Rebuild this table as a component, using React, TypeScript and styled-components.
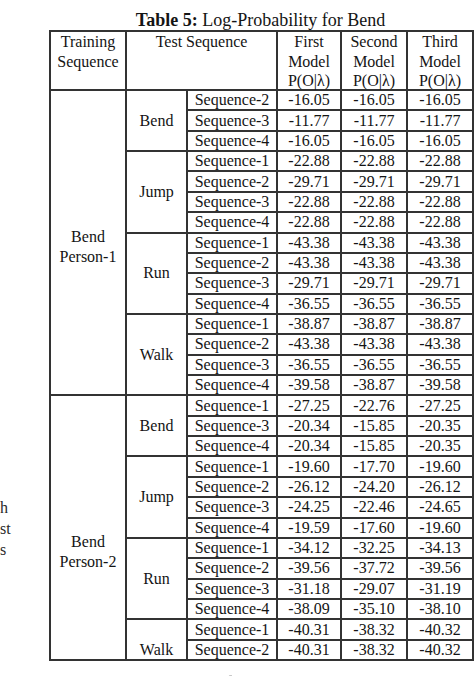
import React from 'react';
import styled, { createGlobalStyle } from 'styled-components';

const GlobalStyle = createGlobalStyle`
  html, body {
    margin: 0;
    padding: 0;
    background: #ffffff;
  }
  body {
    width: 474px;
    height: 676px;
    overflow: hidden;
    font-family: "Liberation Serif", "Times New Roman", serif;
    color: #141414;
  }
`;

const Page = styled.div`
  width: 474px;
  height: 676px;
  overflow: hidden;
  display: flex;
  flex-direction: column;
`;

const Title = styled.div`
  height: 31px;
  box-sizing: border-box;
  padding: 10px 2px 0 49px;
  font-size: 18px;
  line-height: 20px;
  text-align: center;
  white-space: nowrap;

  b {
    font-weight: 700;
  }
`;

const Body = styled.div`
  display: flex;
  align-items: flex-start;
`;

const Gutter = styled.div`
  width: 49px;
  flex-shrink: 0;
  padding-top: 467px;
  display: flex;
  flex-direction: column;
  font-size: 16px;
  line-height: 21px;
  color: #2a2a2a;
`;

const Fragment = styled.div`
  white-space: nowrap;
`;

const Table = styled.table`
  border-collapse: collapse;
  table-layout: fixed;
  width: 423px;
  font-size: 16px;
  line-height: 18px;
`;

const HeadRow = styled.tr`
  height: 59px;
`;

const Row = styled.tr`
  height: 20.36px;
`;

const Th = styled.th`
  font-weight: 400;
  vertical-align: top;
  text-align: center;
  padding: 0;
  border: 2px solid #333;
`;

const HeadText = styled.div`
  height: 57px;
  line-height: 19.5px;
  overflow: visible;
`;

const Td = styled.td<{ $align?: 'middle' | 'bottom'; $shift?: number }>`
  padding: ${({ $shift }) => ($shift ? `${$shift}px 0 0` : '0')};
  text-align: center;
  vertical-align: ${({ $align }) => $align ?? 'middle'};
  border: 2px solid #333;
  white-space: nowrap;
  line-height: 18px;
`;

const Label = styled.div`
  line-height: 20px;
`;

const Footer = styled.div`
  padding: 12px 0 0 40px;
  font-size: 18px;
  line-height: 20px;
  color: #a8a8a8;
  white-space: nowrap;
  filter: blur(0.6px);

  b {
    font-weight: 700;
  }
`;

type Seq = [string, string, string, string];
type Group = { activity: string; rows: Seq[]; align?: 'middle' | 'bottom' };
type Block = { person: string; shift: number; groups: Group[] };

const blocks: Block[] = [
  {
    person: 'Person-1',
    shift: 8,
    groups: [
      {
        activity: 'Bend',
        rows: [
          ['Sequence-2', '-16.05', '-16.05', '-16.05'],
          ['Sequence-3', '-11.77', '-11.77', '-11.77'],
          ['Sequence-4', '-16.05', '-16.05', '-16.05'],
        ],
      },
      {
        activity: 'Jump',
        rows: [
          ['Sequence-1', '-22.88', '-22.88', '-22.88'],
          ['Sequence-2', '-29.71', '-29.71', '-29.71'],
          ['Sequence-3', '-22.88', '-22.88', '-22.88'],
          ['Sequence-4', '-22.88', '-22.88', '-22.88'],
        ],
      },
      {
        activity: 'Run',
        rows: [
          ['Sequence-1', '-43.38', '-43.38', '-43.38'],
          ['Sequence-2', '-43.38', '-43.38', '-43.38'],
          ['Sequence-3', '-29.71', '-29.71', '-29.71'],
          ['Sequence-4', '-36.55', '-36.55', '-36.55'],
        ],
      },
      {
        activity: 'Walk',
        rows: [
          ['Sequence-1', '-38.87', '-38.87', '-38.87'],
          ['Sequence-2', '-43.38', '-43.38', '-43.38'],
          ['Sequence-3', '-36.55', '-36.55', '-36.55'],
          ['Sequence-4', '-39.58', '-38.87', '-39.58'],
        ],
      },
    ],
  },
  {
    person: 'Person-2',
    shift: 48,
    groups: [
      {
        activity: 'Bend',
        rows: [
          ['Sequence-1', '-27.25', '-22.76', '-27.25'],
          ['Sequence-3', '-20.34', '-15.85', '-20.35'],
          ['Sequence-4', '-20.34', '-15.85', '-20.35'],
        ],
      },
      {
        activity: 'Jump',
        rows: [
          ['Sequence-1', '-19.60', '-17.70', '-19.60'],
          ['Sequence-2', '-26.12', '-24.20', '-26.12'],
          ['Sequence-3', '-24.25', '-22.46', '-24.65'],
          ['Sequence-4', '-19.59', '-17.60', '-19.60'],
        ],
      },
      {
        activity: 'Run',
        rows: [
          ['Sequence-1', '-34.12', '-32.25', '-34.13'],
          ['Sequence-2', '-39.56', '-37.72', '-39.56'],
          ['Sequence-3', '-31.18', '-29.07', '-31.19'],
          ['Sequence-4', '-38.09', '-35.10', '-38.10'],
        ],
      },
      {
        activity: 'Walk',
        align: 'bottom',
        rows: [
          ['Sequence-1', '-40.31', '-38.32', '-40.32'],
          ['Sequence-2', '-40.31', '-38.32', '-40.32'],
        ],
      },
    ],
  },
];

const models = ['First', 'Second', 'Third'];

const App: React.FC = () => {
  return (
    <>
      <GlobalStyle />
      <Page>
        <Title>
          <b>Table 5:</b> Log-Probability for Bend
        </Title>
        <Body>
          <Gutter>
            <Fragment>h</Fragment>
            <Fragment>st</Fragment>
            <Fragment>s</Fragment>
          </Gutter>
          <Table>
            <colgroup>
              <col style={{ width: 76 }} />
              <col style={{ width: 61 }} />
              <col style={{ width: 90 }} />
              <col style={{ width: 64 }} />
              <col style={{ width: 66 }} />
              <col style={{ width: 66 }} />
            </colgroup>
            <thead>
              <HeadRow>
                <Th>
                  <HeadText>
                    Training
                    <br />
                    Sequence
                  </HeadText>
                </Th>
                <Th colSpan={2}>
                  <HeadText>Test Sequence</HeadText>
                </Th>
                {models.map((m) => (
                  <Th key={m}>
                    <HeadText>
                      {m}
                      <br />
                      Model
                      <br />
                      P(O|λ)
                    </HeadText>
                  </Th>
                ))}
              </HeadRow>
            </thead>
            <tbody>
              {blocks.map((block) => {
                const total = block.groups.reduce((n, g) => n + g.rows.length, 0);
                return block.groups.map((group, gi) =>
                  group.rows.map((row, ri) => (
                    <Row key={`${block.person}-${group.activity}-${ri}`}>
                      {gi === 0 && ri === 0 && (
                        <Td rowSpan={total} $shift={block.shift}>
                          <Label>
                            Bend
                            <br />
                            {block.person}
                          </Label>
                        </Td>
                      )}
                      {ri === 0 && (
                        <Td rowSpan={group.rows.length} $align={group.align}>
                          {group.activity}
                        </Td>
                      )}
                      {row.map((cell, ci) => (
                        <Td key={ci}>{cell}</Td>
                      ))}
                    </Row>
                  ))
                );
              })}
            </tbody>
          </Table>
        </Body>
        <Footer>
          <b>Table 6:</b> Log-Probability for Jump
        </Footer>
      </Page>
    </>
  );
};

export default App;
